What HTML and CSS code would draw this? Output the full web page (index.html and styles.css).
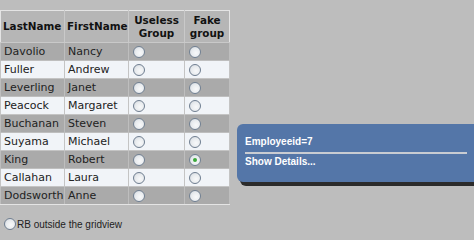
FILE: index.html
```html
<!DOCTYPE html>
<html>
<head>
<meta charset="utf-8">
<link rel="stylesheet" href="styles.css">
</head>
<body>
<div class="page">
  <table class="grid">
    <colgroup>
      <col class="c1"><col class="c2"><col class="c3"><col class="c4">
    </colgroup>
    <thead>
      <tr>
        <th>LastName</th>
        <th>FirstName</th>
        <th class="ctr">Useless<br>Group</th>
        <th class="ctr">Fake<br>group</th>
      </tr>
    </thead>
    <tbody>
      <tr class="odd"><td>Davolio</td><td>Nancy</td><td><span class="rb"></span></td><td><span class="rb"></span></td></tr>
      <tr class="even"><td>Fuller</td><td>Andrew</td><td><span class="rb"></span></td><td><span class="rb"></span></td></tr>
      <tr class="odd"><td>Leverling</td><td>Janet</td><td><span class="rb"></span></td><td><span class="rb"></span></td></tr>
      <tr class="even"><td>Peacock</td><td>Margaret</td><td><span class="rb"></span></td><td><span class="rb"></span></td></tr>
      <tr class="odd"><td>Buchanan</td><td>Steven</td><td><span class="rb"></span></td><td><span class="rb"></span></td></tr>
      <tr class="even"><td>Suyama</td><td>Michael</td><td><span class="rb"></span></td><td><span class="rb"></span></td></tr>
      <tr class="odd"><td>King</td><td>Robert</td><td><span class="rb"></span></td><td><span class="rb checked"></span></td></tr>
      <tr class="even"><td>Callahan</td><td>Laura</td><td><span class="rb"></span></td><td><span class="rb"></span></td></tr>
      <tr class="odd"><td>Dodsworth</td><td>Anne</td><td><span class="rb"></span></td><td><span class="rb"></span></td></tr>
    </tbody>
  </table>
  <div class="outside">
    <span class="rb"></span><span class="outside-label">RB outside the gridview</span>
  </div>
</div>
<div class="popup">
  <div class="popup-line">Employeeid=7</div>
  <div class="popup-sep"></div>
  <div class="popup-line">Show Details...</div>
</div>
</body>
</html>
```
FILE: styles.css
```css
html, body {
  margin: 0;
  padding: 0;
  background: #bdbdbd;
}
body {
  width: 474px;
  height: 239px;
  overflow: hidden;
  position: relative;
  font-family: "DejaVu Sans", Verdana, sans-serif;
}
.page {
  padding-top: 10px;
}
.grid {
  border-collapse: collapse;
  table-layout: fixed;
  width: 229px;
  border: 1px solid #e4e4e4;
  font-size: 11px;
  color: #222;
}
.grid .c1 { width: 64px; }
.grid .c2 { width: 64px; }
.grid .c3 { width: 56px; }
.grid .c4 { width: 45px; }
.grid th {
  background: #b6b6b6;
  color: #111;
  font-weight: bold;
  font-size: 10.4px;
  line-height: 13px;
  height: 31px;
  padding: 0 2px;
  text-align: left;
  white-space: nowrap;
  border: 1px solid #c9c9c9;
  border-top-color: #e4e4e4;
}
.grid th.ctr {
  text-align: center;
}
.grid td {
  height: 17px;
  padding: 0 3px;
  border: 1px solid #c9c9c9;
  vertical-align: middle;
  white-space: nowrap;
}
.grid tr.odd td {
  background: #aaaaaa;
  border-color: #bebebe;
}
.grid tr.even td {
  background: #f1f4f8;
  border-color: #c4c4c4;
}
.grid td:first-child, .grid th:first-child {
  border-left-color: #e4e4e4;
}
.grid td:last-child, .grid th:last-child {
  border-right-color: #e4e4e4;
}
.grid tr:last-child td {
  border-bottom-color: #e4e4e4;
}
.grid td .rb {
  margin-left: 1px;
  vertical-align: middle;
}
.rb {
  display: inline-block;
  box-sizing: border-box;
  width: 12px;
  height: 12px;
  border-radius: 50%;
  border: 1px solid #6f7e90;
  background: radial-gradient(circle at 60% 60%, #f8f9fa 0%, #e9ecef 50%, #cdd3da 100%);
  position: relative;
}
.rb.checked::after {
  content: "";
  position: absolute;
  left: 3px;
  top: 3px;
  width: 4px;
  height: 4px;
  border-radius: 50%;
  background: #3aa83a;
}
.outside {
  display: flex;
  align-items: center;
  margin-top: 13px;
  padding-left: 4px;
  font-family: "Liberation Sans", Arial, sans-serif;
  font-size: 10px;
  color: #222;
}
.outside-label {
  margin-left: 1px;
}
.popup {
  position: absolute;
  left: 237px;
  top: 124px;
  width: 250px;
  height: 58px;
  box-sizing: border-box;
  background: #5476a8;
  border-radius: 6px;
  box-shadow: 3px 4px 0 #2b2b2b;
  padding: 12px 0 0 8px;
  font-family: "Liberation Sans", Arial, sans-serif;
  font-weight: bold;
  font-size: 10px;
  color: #ffffff;
}
.popup-line {
  line-height: 12px;
}
.popup-sep {
  width: 222px;
  height: 2px;
  background: #c9ccd2;
  margin: 4px 0 2px 0;
}
```
